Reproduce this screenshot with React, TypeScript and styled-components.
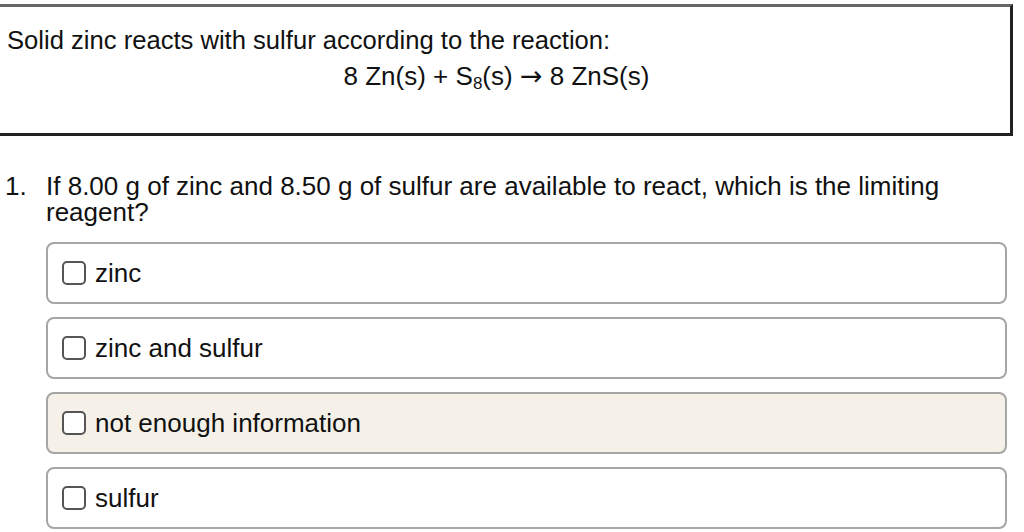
import React from "react";
import styled, { createGlobalStyle } from "styled-components";

const Global = createGlobalStyle`
  html, body { margin: 0; padding: 0; background: #fff; }
  body { font-family: "Liberation Sans", Arial, Helvetica, sans-serif; color: #111; }
`;

const Page = styled.div`
  width: 1024px;
  height: 532px;
  overflow: hidden;
  display: flex;
  flex-direction: column;
  font-size: 26px;
`;

const Intro = styled.div`
  margin: 4px 11px 0 -4px;
  border: 3px solid #222;
  border-top-color: #666;
  padding: 18px 8px 42px 8px;
  display: flex;
  flex-direction: column;
  gap: 6px;
  line-height: 30px;
`;

const IntroLine = styled.div<{ $center?: boolean }>`
  text-align: ${(p) => (p.$center ? "center" : "left")};
  font-size: ${(p) => (p.$center ? "26px" : "25.6px")};
  padding-right: ${(p) => (p.$center ? "16px" : "0")};
`;

const Sub = styled.sub`
  font-size: 17px;
  line-height: 0;
  vertical-align: -4px;
`;

const Arrow = styled.span`
  font-family: "DejaVu Sans", sans-serif;
  font-size: 27px;
  line-height: 0;
`;

const Question = styled.div`
  margin-top: 37px;
  display: flex;
  padding-left: 5px;
  line-height: 26px;
`;

const Num = styled.div`
  width: 41px;
  flex: none;
`;

const Body = styled.div`
  width: 961px;
  display: flex;
  flex-direction: column;
`;

const Options = styled.div`
  margin-top: 17px;
  display: flex;
  flex-direction: column;
  gap: 13px;
`;

const Option = styled.label<{ $hl?: boolean }>`
  box-sizing: border-box;
  height: 62px;
  border: 2px solid #a6a6a6;
  border-radius: 8px;
  background: ${(p) => (p.$hl ? "#f5f1e8" : "#fff")};
  display: flex;
  align-items: center;
  gap: 9px;
  padding-left: 14px;
`;

const Box = styled.span`
  box-sizing: border-box;
  width: 24px;
  height: 24px;
  border: 2px solid #555;
  border-radius: 5px;
  background: #fff;
  flex: none;
`;

const options = ["zinc", "zinc and sulfur", "not enough information", "sulfur"];

export default function App() {
  return (
    <Page>
      <Global />
      <Intro>
        <IntroLine>Solid zinc reacts with sulfur according to the reaction:</IntroLine>
        <IntroLine $center>
          8 Zn(s) + S<Sub>8</Sub>(s) <Arrow>→</Arrow> 8 ZnS(s)
        </IntroLine>
      </Intro>
      <Question>
        <Num>1.</Num>
        <Body>
          <div>
            If 8.00 g of zinc and 8.50 g of sulfur are available to react, which is the limiting reagent?
          </div>
          <Options>
            {options.map((o, i) => (
              <Option key={o} $hl={i === 2}>
                <Box />
                {o}
              </Option>
            ))}
          </Options>
        </Body>
      </Question>
    </Page>
  );
}
